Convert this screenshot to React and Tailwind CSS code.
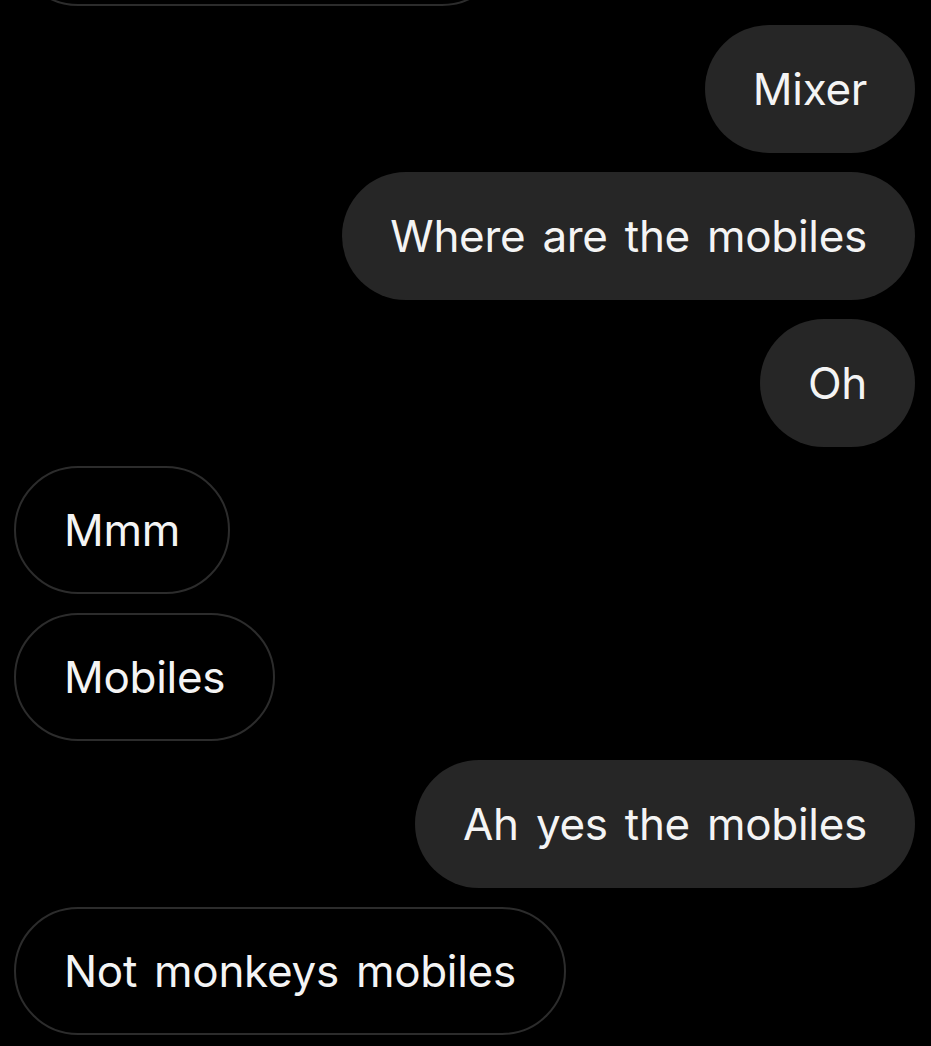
const messages = [
  { id: 0, text: 'Okay', mine: false, width: 'w-[492px]' },
  { id: 1, text: 'Mixer', mine: true },
  { id: 2, text: 'Where are the mobiles', mine: true },
  { id: 3, text: 'Oh', mine: true },
  { id: 4, text: 'Mmm', mine: false },
  { id: 5, text: 'Mobiles', mine: false },
  { id: 6, text: 'Ah yes the mobiles', mine: true },
  { id: 7, text: 'Not monkeys mobiles', mine: false },
];

const Bubble = ({ text, mine, width }) => {
  const base =
    'h-[128px] rounded-full flex items-center justify-center px-[48px] whitespace-nowrap text-[44px] leading-none tracking-[-0.3px] [word-spacing:5px] text-[#f4f4f4]';
  if (mine) {
    return <div className={`${base} bg-[#262626]`}>{text}</div>;
  }
  return (
    <div className={`${base} border-2 border-[#2c2c2c] bg-black ${width || ''}`}>
      {width ? <span className="invisible">{text}</span> : text}
    </div>
  );
};

export default function App() {
  return (
    <div
      className="w-[931px] h-[1046px] overflow-hidden bg-black"
      style={{ fontFamily: 'Inter, "Noto Sans", "Liberation Sans", sans-serif' }}
    >
      <div className="flex flex-col gap-[19px] mt-[-122px] pl-[14px] pr-4">
        {messages.map((m) => (
          <div key={m.id} className={m.mine ? 'flex justify-end' : 'flex justify-start'}>
            <Bubble text={m.text} mine={m.mine} width={m.width} />
          </div>
        ))}
      </div>
    </div>
  );
}
